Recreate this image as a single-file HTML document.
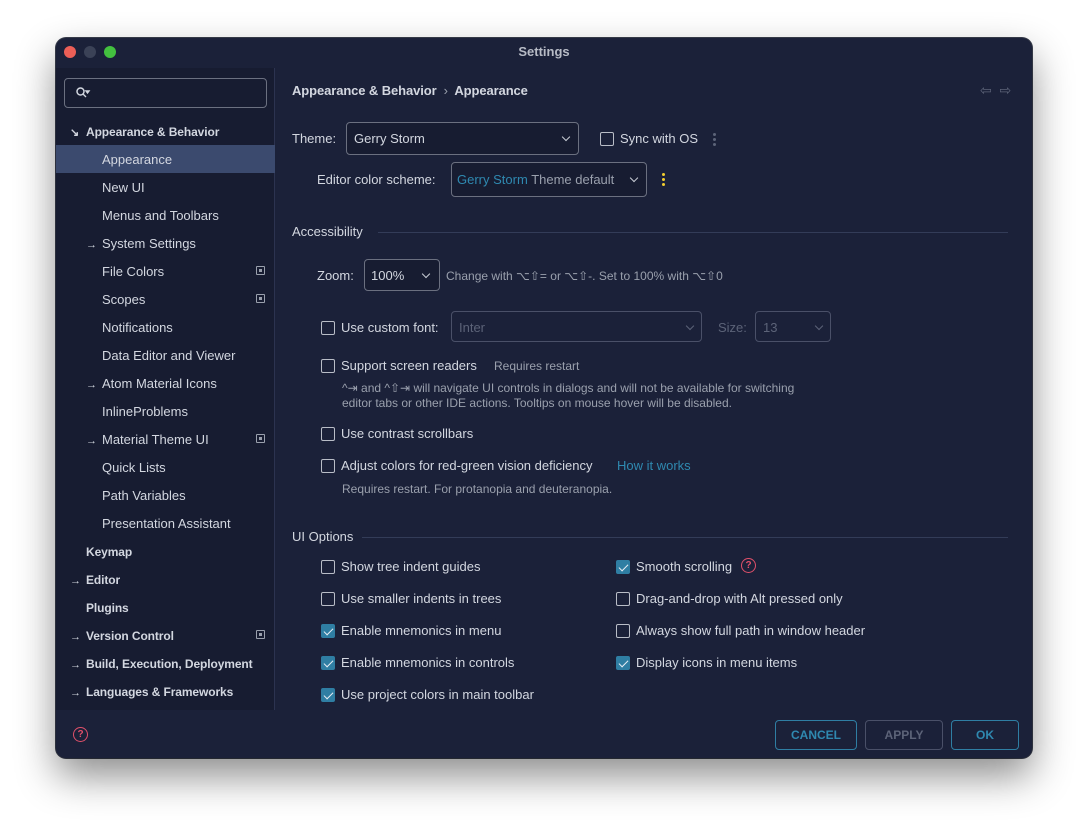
<!DOCTYPE html>
<html><head><style>
*{margin:0;padding:0;box-sizing:border-box}
body{width:1088px;height:833px;background:#fff;font-family:"Liberation Sans",sans-serif;font-size:13px;color:#d3d7e0;position:relative;overflow:hidden}
.win{position:absolute;left:56px;top:38px;width:976px;height:720px;background:#1b2139;border-radius:10px;box-shadow:0 18px 40px rgba(0,0,0,.45),0 0 0 1px #3a3f4d;overflow:hidden}
.a{position:absolute;white-space:nowrap}
.side{position:absolute;left:0;top:30px;width:219px;height:642px;background:#171c31;border-right:1px solid #2c3350}
.b{font-weight:bold;font-size:12px;letter-spacing:-0.1px}
.ar{font-size:11px;display:inline-block;width:16px}
.cb{position:absolute;width:14px;height:14px;border:1.5px solid #b9bdc7;border-radius:2px}
.cb.on{background:#2f7ea3;border-color:#2f7ea3}
.cb.on:after{content:"";position:absolute;left:3.5px;top:0.5px;width:4px;height:8px;border:solid #e8eef5;border-width:0 1.5px 1.5px 0;transform:rotate(45deg)}
.box{position:absolute;border:1px solid #6b7080;border-radius:4px;background:#171c31}
.chev{position:absolute;width:6px;height:6px;border:solid #c8ccd5;border-width:0 1.5px 1.5px 0;transform:rotate(45deg)}
.gray{color:#9aa0ad}
.line{position:absolute;height:1px;background:#333c58}
.btn{position:absolute;height:30px;border:1.5px solid #2f7ea3;border-radius:4px;color:#2f89b0;font-weight:bold;font-size:12px;text-align:center;line-height:28px}
.sq{position:absolute;width:9px;height:9px;border:1px solid #9aa0ad;border-radius:1px}
.sq:after{content:"";position:absolute;left:2px;top:2px;width:3px;height:3px;background:#9aa0ad}
.help{position:absolute;width:15px;height:15px;border:1.5px solid #e0506a;border-radius:50%;color:#e0506a;font-size:10px;font-weight:bold;text-align:center;line-height:13px}
.dots{position:absolute;width:3px}
.dots i{display:block;width:3px;height:3px;border-radius:50%;margin-bottom:2px}
</style></head><body>
<div class="win">
 <div class="a" style="left:0;top:0;width:976px;text-align:center;line-height:28px;color:#b8bcc6;font-weight:bold;font-size:13px">Settings</div>
 <div class="a" style="left:8px;top:8px;width:12px;height:12px;border-radius:50%;background:#ec5f57"></div>
 <div class="a" style="left:28px;top:8px;width:12px;height:12px;border-radius:50%;background:#3b4257"></div>
 <div class="a" style="left:48px;top:8px;width:12px;height:12px;border-radius:50%;background:#43c03f"></div>
 <div class="side">
  <div class="a" style="left:8px;top:10px;width:203px;height:30px;border:1px solid #6b7080;border-radius:4px"></div>
  <svg class="a" style="left:19px;top:18px" width="16" height="14"><circle cx="5.5" cy="5.5" r="3.5" fill="none" stroke="#d3d7e0" stroke-width="1.5"/><path d="M8 8l3 3M11 5h3l-1.5 2z" stroke="#d3d7e0" stroke-width="1.4" fill="#d3d7e0"/></svg>
  <div class="a" style="left:0;top:77px;width:219px;height:28px;background:#3b4a6e"></div>
 </div>
 <div class="a" style="left:0;top:30px;width:220px;font-size:13px">
  <div class="a b" style="left:14px;top:57px"><span class="ar">↘</span>Appearance &amp; Behavior</div>
  <div class="a" style="left:46px;top:84px">Appearance</div>
  <div class="a" style="left:46px;top:112px">New UI</div>
  <div class="a" style="left:46px;top:140px">Menus and Toolbars</div>
  <div class="a" style="left:30px;top:168px"><span class="ar">→</span>System Settings</div>
  <div class="a" style="left:46px;top:196px">File Colors</div>
  <div class="a" style="left:46px;top:224px">Scopes</div>
  <div class="a" style="left:46px;top:252px">Notifications</div>
  <div class="a" style="left:46px;top:280px">Data Editor and Viewer</div>
  <div class="a" style="left:30px;top:308px"><span class="ar">→</span>Atom Material Icons</div>
  <div class="a" style="left:46px;top:336px">InlineProblems</div>
  <div class="a" style="left:30px;top:364px"><span class="ar">→</span>Material Theme UI</div>
  <div class="a" style="left:46px;top:392px">Quick Lists</div>
  <div class="a" style="left:46px;top:420px">Path Variables</div>
  <div class="a" style="left:46px;top:448px">Presentation Assistant</div>
  <div class="a b" style="left:30px;top:477px">Keymap</div>
  <div class="a b" style="left:14px;top:505px"><span class="ar">→</span>Editor</div>
  <div class="a b" style="left:30px;top:533px">Plugins</div>
  <div class="a b" style="left:14px;top:561px"><span class="ar">→</span>Version Control</div>
  <div class="a b" style="left:14px;top:589px"><span class="ar">→</span>Build, Execution, Deployment</div>
  <div class="a b" style="left:14px;top:617px"><span class="ar">→</span>Languages &amp; Frameworks</div>
  <div class="sq" style="left:200px;top:198px"></div>
  <div class="sq" style="left:200px;top:226px"></div>
  <div class="sq" style="left:200px;top:366px"></div>
  <div class="sq" style="left:200px;top:562px"></div>
 </div>
 <div class="help" style="left:17px;top:689px">?</div>

 <div class="a b" style="left:236px;top:45px;font-size:13px">Appearance &amp; Behavior &nbsp;<span style="font-weight:normal;color:#9aa0ad">›</span>&nbsp; Appearance</div>
 <div class="a" style="left:924px;top:44px;color:#5c6378;font-size:14px">⇦ &nbsp;⇨</div>

 <div class="a" style="left:236px;top:93px">Theme:</div>
 <div class="box" style="left:290px;top:84px;width:233px;height:33px"></div>
 <div class="a" style="left:298px;top:93px">Gerry Storm</div>
 <div class="chev" style="left:507px;top:96px"></div>
 <div class="cb" style="left:544px;top:94px"></div>
 <div class="a" style="left:564px;top:93px">Sync with OS</div>
 <div class="dots" style="left:657px;top:95px"><i style="background:#5c6378"></i><i style="background:#5c6378"></i><i style="background:#5c6378"></i></div>

 <div class="a" style="left:261px;top:134px">Editor color scheme:</div>
 <div class="box" style="left:395px;top:124px;width:196px;height:35px"></div>
 <div class="a" style="left:401px;top:134px"><span style="color:#2f89b0">Gerry Storm</span> <span class="gray">Theme default</span></div>
 <div class="chev" style="left:575px;top:137px"></div>
 <div class="dots" style="left:606px;top:135px"><i style="background:#f2cd2f"></i><i style="background:#f2cd2f"></i><i style="background:#f2cd2f"></i></div>

 <div class="a" style="left:236px;top:186px">Accessibility</div>
 <div class="line" style="left:322px;top:194px;width:630px"></div>

 <div class="a" style="left:261px;top:230px">Zoom:</div>
 <div class="box" style="left:308px;top:221px;width:76px;height:32px"></div>
 <div class="a" style="left:315px;top:230px">100%</div>
 <div class="chev" style="left:367px;top:233px"></div>
 <div class="a gray" style="left:390px;top:231px;font-size:12px">Change with ⌥⇧= or ⌥⇧-. Set to 100% with ⌥⇧0</div>

 <div class="cb" style="left:265px;top:283px"></div>
 <div class="a" style="left:285px;top:282px">Use custom font:</div>
 <div class="box" style="left:395px;top:273px;width:251px;height:31px;border-color:#4a5068;background:none"></div>
 <div class="a" style="left:403px;top:282px;color:#5c6378">Inter</div>
 <div class="chev" style="left:631px;top:285px;border-color:#5c6378"></div>
 <div class="a" style="left:662px;top:282px;color:#5c6378">Size:</div>
 <div class="box" style="left:699px;top:273px;width:76px;height:31px;border-color:#4a5068;background:none"></div>
 <div class="a" style="left:707px;top:282px;color:#5c6378">13</div>
 <div class="chev" style="left:760px;top:285px;border-color:#5c6378"></div>

 <div class="cb" style="left:265px;top:321px"></div>
 <div class="a" style="left:285px;top:320px">Support screen readers</div>
 <div class="a gray" style="left:438px;top:321px;font-size:12px">Requires restart</div>
 <div class="a gray" style="left:286px;top:343px;font-size:12px;line-height:15px">^⇥ and ^⇧⇥ will navigate UI controls in dialogs and will not be available for switching<br>editor tabs or other IDE actions. Tooltips on mouse hover will be disabled.</div>

 <div class="cb" style="left:265px;top:389px"></div>
 <div class="a" style="left:285px;top:388px">Use contrast scrollbars</div>
 <div class="cb" style="left:265px;top:421px"></div>
 <div class="a" style="left:285px;top:420px">Adjust colors for red-green vision deficiency</div>
 <div class="a" style="left:561px;top:420px;color:#2f89b0">How it works</div>
 <div class="a gray" style="left:286px;top:444px;font-size:12px">Requires restart. For protanopia and deuteranopia.</div>

 <div class="a" style="left:236px;top:491px">UI Options</div>
 <div class="line" style="left:306px;top:499px;width:646px"></div>

 <div class="cb" style="left:265px;top:522px"></div><div class="a" style="left:285px;top:521px">Show tree indent guides</div>
 <div class="cb" style="left:265px;top:554px"></div><div class="a" style="left:285px;top:553px">Use smaller indents in trees</div>
 <div class="cb on" style="left:265px;top:586px"></div><div class="a" style="left:285px;top:585px">Enable mnemonics in menu</div>
 <div class="cb on" style="left:265px;top:618px"></div><div class="a" style="left:285px;top:617px">Enable mnemonics in controls</div>
 <div class="cb on" style="left:265px;top:650px"></div><div class="a" style="left:285px;top:649px">Use project colors in main toolbar</div>

 <div class="cb on" style="left:560px;top:522px"></div><div class="a" style="left:580px;top:521px">Smooth scrolling</div>
 <div class="help" style="left:685px;top:520px">?</div>
 <div class="cb" style="left:560px;top:554px"></div><div class="a" style="left:580px;top:553px">Drag-and-drop with Alt pressed only</div>
 <div class="cb" style="left:560px;top:586px"></div><div class="a" style="left:580px;top:585px">Always show full path in window header</div>
 <div class="cb on" style="left:560px;top:618px"></div><div class="a" style="left:580px;top:617px">Display icons in menu items</div>

 <div class="btn" style="left:719px;top:682px;width:82px">CANCEL</div>
 <div class="btn" style="left:809px;top:682px;width:78px;border-color:#4a5068;color:#5c6378">APPLY</div>
 <div class="btn" style="left:895px;top:682px;width:68px">OK</div>
</div>
</body></html>
